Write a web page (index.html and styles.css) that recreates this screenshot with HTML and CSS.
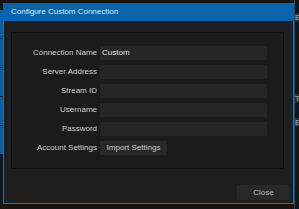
FILE: index.html
```html
<!DOCTYPE html>
<html lang="en">
  <head>
    <meta charset="UTF-8" />
    <meta name="viewport" content="width=device-width, initial-scale=1.0" />
    <title>Configure Custom Connection</title>
    <link rel="stylesheet" href="styles.css">
  </head>
  <body>
    <div class="backdrop">
      <div class="side side-left">
        <span></span><span></span><span></span><span></span><span></span>
      </div>

      <div class="dialog">
        <div class="titlebar">Configure Custom Connection</div>

        <div class="content">
          <div class="panel">
            <label class="label">Connection Name</label>
            <div class="field">Custom</div>

            <label class="label">Server Address</label>
            <div class="field"></div>

            <label class="label">Stream ID</label>
            <div class="field"></div>

            <label class="label">Username</label>
            <div class="field"></div>

            <label class="label">Password</label>
            <div class="field"></div>

            <label class="label">Account Settings</label>
            <div class="field-row">
              <button class="btn">Import Settings</button>
            </div>
          </div>

          <div class="footer">
            <button class="btn btn-close">Close</button>
          </div>
        </div>
      </div>

      <div class="side side-right">
        <span class="tag tag-top">E</span>
        <span class="tag tag-mid">T</span>
        <span class="tag tag-low">E</span>
      </div>
    </div>
  </body>
</html>
```

FILE: styles.css
```css
* {
  margin: 0;
  padding: 0;
  box-sizing: border-box;
}

body {
  font-family: 'Liberation Sans', Arial, sans-serif;
  background: #141414;
  color: #d6d6d6;
  width: 299px;
  height: 209px;
  overflow: hidden;
}

.backdrop {
  display: flex;
  height: 209px;
}

.side {
  display: flex;
  flex-direction: column;
}

.side-left {
  width: 3px;
  padding-top: 10px;
  gap: 1px;
}

.side-left span {
  display: block;
  background: #0e5d9c;
  height: 28px;
}

.side-right {
  position: relative;
  width: 5px;
  border-left: 1px solid #0e4f86;
}

.tag {
  position: absolute;
  left: 0;
  width: 5px;
  font-size: 8px;
  color: #bbb;
  background: #2a2a2a;
  line-height: 9px;
}

.tag-top { top: 13px; }
.tag-mid { top: 94px; }
.tag-low { top: 118px; }

.dialog {
  margin-top: 3px;
  width: 291px;
  height: 201px;
  background: #1e1e1e;
  border: 1px solid #1674c2;
  border-top: none;
  display: flex;
  flex-direction: column;
}

.titlebar {
  height: 18px;
  margin: 0 -1px;
  background: #0865ab;
  color: #dce9f5;
  font-size: 8px;
  line-height: 18px;
  padding-left: 8px;
}

.content {
  flex: 1;
  padding: 11px 3px 3px 7px;
  display: flex;
  flex-direction: column;
}

.panel {
  width: 273px;
  background: #1b1b1b;
  border: 1px solid #101010;
  padding: 13px 16px 13px 0;
  display: grid;
  grid-template-columns: 85px 167px;
  column-gap: 3px;
  row-gap: 5px;
  grid-auto-rows: 14px;
}

.label {
  text-align: right;
  font-size: 8px;
  line-height: 14px;
  color: #cfcfcf;
}

.field {
  background: #262626;
  font-size: 8px;
  line-height: 14px;
  padding-left: 2px;
  color: #e2e2e2;
}

.field-row {
  display: flex;
}

.btn {
  font-family: inherit;
  background: #282828;
  border: none;
  color: #cfcfcf;
  font-size: 8px;
  line-height: 14px;
  padding: 0 6px;
  width: 67px;
  cursor: pointer;
}

.btn:hover {
  background: #333;
}

.footer {
  margin-top: auto;
  display: flex;
  justify-content: flex-end;
}

.btn-close {
  width: 53px;
  height: 15px;
  color: #bdbdbd;
}
```
